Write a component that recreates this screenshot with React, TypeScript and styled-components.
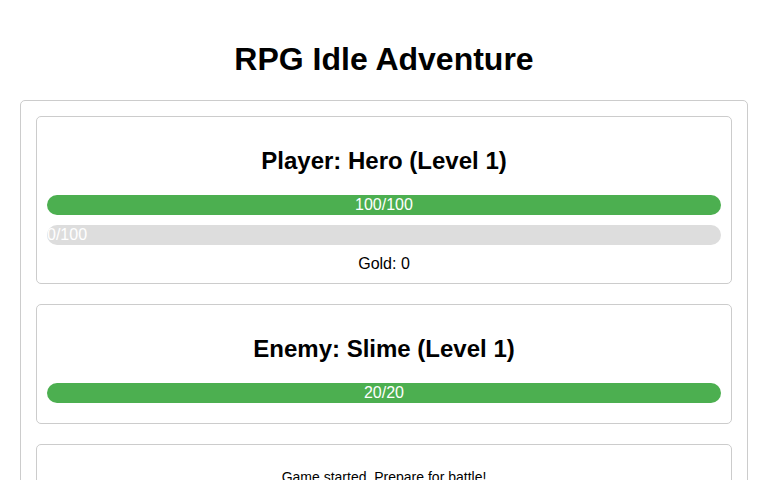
import React from "react";
import styled, { createGlobalStyle } from "styled-components";

const GlobalStyle = createGlobalStyle`
  html, body {
    margin: 0;
    background: #fff;
  }
  body {
    padding: 20px;
    font-family: "Liberation Sans", Arial, sans-serif;
    color: #000;
  }
`;

const Title = styled.h1`
  text-align: center;
  font-size: 32px;
  margin: 21.44px 0;
`;

const Container = styled.div`
  border: 1px solid #ccc;
  border-radius: 5px;
  padding: 15px;
`;

const Card = styled.div`
  border: 1px solid #ccc;
  border-radius: 5px;
  padding: 10px;
  margin-bottom: 20px;
  text-align: center;
`;

const CardTitle = styled.h2`
  font-size: 24px;
  margin: 19.92px 0;
`;

const Bar = styled.div`
  height: 20px;
  background: #ddd;
  border-radius: 10px;
  overflow: hidden;
  margin: 10px 0;
`;

const Fill = styled.div`
  height: 100%;
  background: #4caf50;
  color: #fff;
  font-size: 16px;
  line-height: 20px;
  text-align: center;
  white-space: nowrap;
`;

const Gold = styled.div`
  font-size: 16px;
  line-height: 18px;
`;

const Log = styled.div`
  font-size: 14px;
  p {
    margin: 14px 0;
  }
`;

const ProgressBar: React.FC<{ value: number; max: number }> = ({ value, max }) => (
  <Bar>
    <Fill style={{ width: `${(value / max) * 100}%` }}>
      {value}/{max}
    </Fill>
  </Bar>
);

export default function App() {
  return (
    <>
      <GlobalStyle />
      <Title>RPG Idle Adventure</Title>
      <Container>
        <Card>
          <CardTitle>Player: Hero (Level 1)</CardTitle>
          <ProgressBar value={100} max={100} />
          <ProgressBar value={0} max={100} />
          <Gold>Gold: 0</Gold>
        </Card>
        <Card>
          <CardTitle>Enemy: Slime (Level 1)</CardTitle>
          <ProgressBar value={20} max={20} />
        </Card>
        <Card>
          <Log>
            <p>Game started. Prepare for battle!</p>
          </Log>
        </Card>
      </Container>
    </>
  );
}
